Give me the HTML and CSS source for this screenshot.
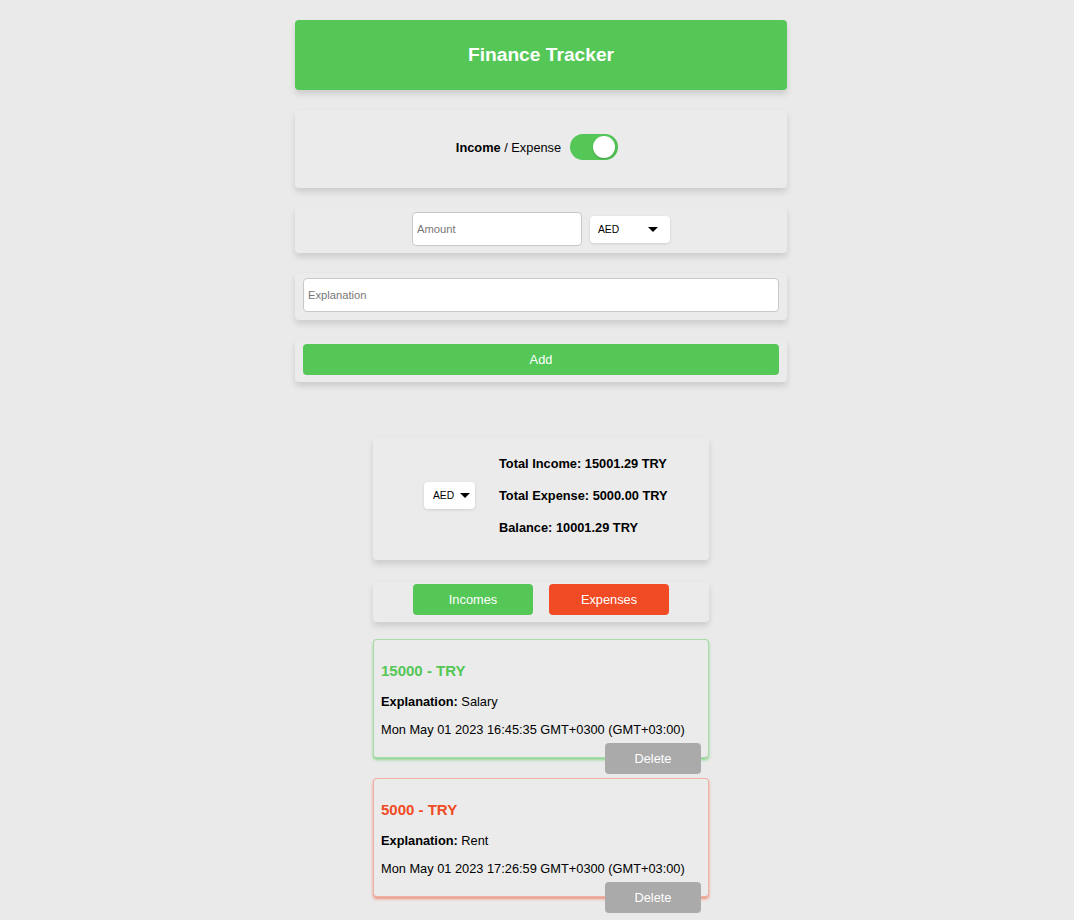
FILE: index.html
```
<!DOCTYPE html>
<html lang="en">
<head>
    <meta charset="UTF-8">
    <meta name="viewport" content="width=device-width, initial-scale=1.0">
    <title>Finance Tracker</title>
    <link rel="stylesheet" href="styles.css">
</head>
<body>
    <div class="app">
        <header class="header">
            <h1>Finance Tracker</h1>
        </header>

        <div class="card type-card">
            <span class="type-label"><b>Income</b> / Expense</span>
            <label class="switch">
                <input type="checkbox" checked>
                <span class="slider"></span>
            </label>
        </div>

        <div class="card amount-card">
            <input type="number" class="amount-input" placeholder="Amount">
            <div class="currency">AED<span class="arrow"></span></div>
        </div>

        <div class="card field-card">
            <input type="text" class="text-input" placeholder="Explanation">
        </div>

        <div class="card add-card">
            <button class="add-btn">Add</button>
        </div>

        <div class="list">
            <div class="card summary">
                <div class="currency small">AED<span class="arrow"></span></div>
                <div class="totals">
                    <p>Total Income: 15001.29 TRY</p>
                    <p>Total Expense: 5000.00 TRY</p>
                    <p>Balance: 10001.29 TRY</p>
                </div>
            </div>

            <div class="card filter">
                <button class="filter-btn incomes">Incomes</button>
                <button class="filter-btn expenses">Expenses</button>
            </div>

            <div class="item income">
                <h3>15000 - TRY</h3>
                <p><b>Explanation:</b> Salary</p>
                <p>Mon May 01 2023 16:45:35 GMT+0300 (GMT+03:00)</p>
                <button class="delete-btn">Delete</button>
            </div>

            <div class="item expense">
                <h3>5000 - TRY</h3>
                <p><b>Explanation:</b> Rent</p>
                <p>Mon May 01 2023 17:26:59 GMT+0300 (GMT+03:00)</p>
                <button class="delete-btn">Delete</button>
            </div>
        </div>
    </div>
</body>
</html>
```

FILE: styles.css
```
body {
    font-family: "Liberation Sans", Arial, sans-serif;
    margin: 0;
    padding: 20px 0 0 8px;
    background: #eaeaea;
    color: #000;
}
.app {
    width: 492px;
    margin: 0 auto;
}
.header {
    background: #54c757;
    height: 70px;
    border-radius: 4px;
    display: flex;
    align-items: center;
    justify-content: center;
    box-shadow: 0 4px 6px rgba(0, 0, 0, 0.13);
    margin-bottom: 20px;
}
.header h1 {
    margin: 0;
    color: #fff;
    font-size: 19.2px;
    font-weight: bold;
}
.card {
    background: #ebebeb;
    border-radius: 4px;
    box-shadow: 0 4px 6px rgba(0, 0, 0, 0.13);
}
.type-card {
    display: flex;
    align-items: center;
    justify-content: center;
    gap: 9px;
    padding: 24px 8px 28px 0;
    margin-bottom: 19px;
}
.type-label {
    font-size: 12.8px;
}
.switch {
    position: relative;
    display: inline-block;
    width: 48px;
    height: 26px;
}
.switch input {
    display: none;
}
.slider {
    position: absolute;
    inset: 0;
    background: #54c757;
    border-radius: 13px;
    box-shadow: inset -1px 0 1px rgba(0, 0, 0, 0.08);
}
.slider::before {
    content: "";
    position: absolute;
    top: 2px;
    right: 3px;
    width: 22px;
    height: 22px;
    border-radius: 50%;
    background: #fff;
    box-shadow: 0 1px 2px rgba(0, 0, 0, 0.2);
}
.amount-card {
    display: flex;
    align-items: center;
    justify-content: center;
    gap: 8px;
    padding: 5px 0 7px;
    margin-bottom: 20px;
}
.amount-input,
.text-input {
    box-sizing: border-box;
    height: 34px;
    border: 1px solid #c8c8c8;
    border-radius: 4px;
    background: #fff;
    padding: 0 4px;
    font-family: inherit;
    font-size: 11.2px;
}
.amount-input {
    width: 170px;
}
.amount-input::placeholder,
.text-input::placeholder {
    color: #777;
}
.currency {
    box-sizing: border-box;
    width: 80px;
    height: 27px;
    background: #fff;
    border-radius: 4px;
    box-shadow: 0 1px 3px rgba(0, 0, 0, 0.12);
    display: flex;
    align-items: center;
    justify-content: space-between;
    padding: 0 12px 0 8px;
    font-size: 10.3px;
    margin-top: 1px;
}
.currency.small {
    width: 51px;
    padding: 0 5px 0 9px;
    margin-top: 0;
}
.arrow {
    width: 0;
    height: 0;
    border-left: 5px solid transparent;
    border-right: 5px solid transparent;
    border-top: 5px solid #000;
}
.field-card {
    padding: 5px 8px 8px;
    margin-bottom: 19px;
}
.text-input {
    width: 100%;
}
.add-card {
    padding: 5px 8px 7px;
}
.add-btn {
    width: 100%;
    height: 31px;
    border: none;
    border-radius: 4px;
    background: #54c757;
    color: #fff;
    font-family: inherit;
    font-size: 12.8px;
    cursor: pointer;
}
.list {
    width: 336px;
    margin: 55px auto 0;
}
.summary {
    display: flex;
    align-items: center;
    gap: 24px;
    padding: 19px 0 25px 51px;
    margin-bottom: 22px;
}
.totals {
    display: flex;
    flex-direction: column;
    gap: 17px;
}
.totals p {
    margin: 0;
    font-size: 12.8px;
    line-height: 15px;
    font-weight: bold;
}
.filter {
    display: flex;
    justify-content: center;
    gap: 16px;
    padding: 2px 0 7px;
    margin-bottom: 17px;
}
.filter-btn {
    width: 120px;
    height: 31px;
    border: none;
    border-radius: 4px;
    color: #fff;
    font-family: inherit;
    font-size: 12.8px;
    cursor: pointer;
}
.incomes {
    background: #54c757;
}
.expenses {
    background: #f04b24;
}
.item {
    background: #ebebeb;
    border-radius: 4px;
    padding: 8px 7px;
    margin-bottom: 20px;
}
.item.income {
    border: 1px solid rgba(84, 199, 87, 0.45);
    box-shadow: 0 2px 3px rgba(84, 199, 87, 0.6);
}
.item.expense {
    border: 1px solid rgba(240, 75, 36, 0.35);
    box-shadow: 0 2px 3px rgba(240, 75, 36, 0.55);
}
.item h3 {
    margin: 14px 0 14px;
    font-size: 15px;
    line-height: 18px;
}
.income h3 {
    color: #54c757;
}
.expense h3 {
    color: #f04b24;
}
.item p {
    margin: 0 0 13px;
    font-size: 12.8px;
    line-height: 15px;
}
.item p:last-of-type {
    margin-bottom: 0;
}
.delete-btn {
    display: block;
    width: 96px;
    height: 31px;
    margin: 6px 0 -25px auto;
    border: none;
    border-radius: 4px;
    background: #aaa;
    color: #fff;
    font-family: inherit;
    font-size: 12.8px;
    cursor: pointer;
}
```
